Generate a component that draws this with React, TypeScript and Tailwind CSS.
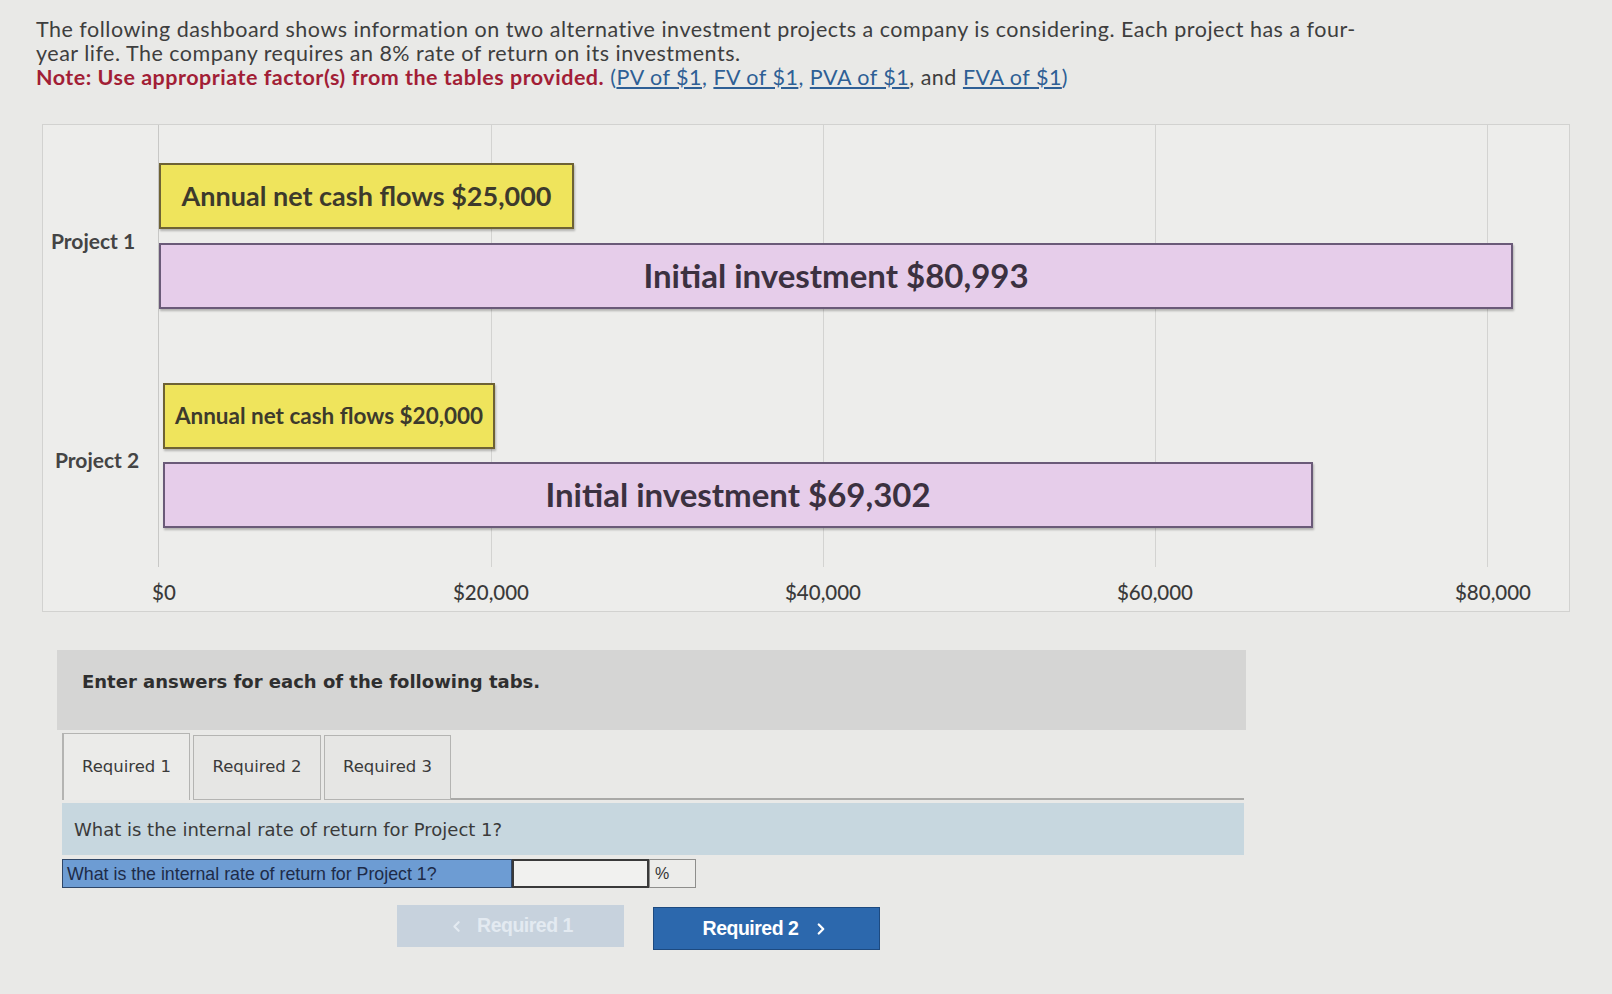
import React from "react";
import { ChevronLeft, ChevronRight } from "lucide-react";

const PX_PER_DOLLAR = 332 / 20000;

function CashBar({ value, small }: { value: number; small?: boolean }) {
  return (
    <div
      className="h-[66px] bg-[#efe45c] border-2 border-[#6e6234] shadow-[1px_2px_2px_rgba(0,0,0,0.25)] flex items-center justify-center"
      style={{ width: Math.round(value * PX_PER_DOLLAR) }}
    >
      <span
        className={
          "font-bold text-[#3d3a2c] whitespace-nowrap " +
          (small ? "text-[22.5px]" : "text-[27px]")
        }
      >
        Annual net cash flows ${value.toLocaleString("en-US")}
      </span>
    </div>
  );
}

function InvestBar({ value, width }: { value: number; width: number }) {
  return (
    <div
      className="h-[66px] bg-[#e6cdea] border-2 border-[#6a5a78] shadow-[1px_2px_2px_rgba(0,0,0,0.25)] flex items-center justify-center"
      style={{ width }}
    >
      <span className="font-bold text-[33px] text-[#3b3140] whitespace-nowrap">
        Initial investment ${value.toLocaleString("en-US")}
      </span>
    </div>
  );
}

export default function App() {
  const ticks = ["$0", "$20,000", "$40,000", "$60,000", "$80,000"];
  return (
    <div className="w-[1612px] h-[994px] overflow-hidden bg-[#e9e9e7] font-['Lato',sans-serif]">
      {/* intro text */}
      <div className="pl-[36px] pt-[17px] text-[21.5px] leading-[24px] tracking-[0.5px] text-[#3e3e3e]">
        The following dashboard shows information on two alternative investment projects a company is considering. Each project has a four-
        <br />
        year life. The company requires an 8% rate of return on its investments.
        <br />
        <span className="font-bold text-[#a21e36]">Note: Use appropriate factor(s) from the tables provided.</span>{" "}
        <span className="text-[#2e5f95]">
          (<span className="underline">PV of $1</span>, <span className="underline">FV of $1</span>,{" "}
          <span className="underline">PVA of $1</span>
        </span>
        <span>, and </span>
        <span className="text-[#2e5f95]">
          <span className="underline">FVA of $1</span>)
        </span>
      </div>

      {/* chart */}
      <div className="ml-[42px] mt-[35px] w-[1528px] h-[488px] border border-[#d2d2d0] bg-[#ededeb] flex flex-col font-['Lato',sans-serif]">
        <div className="flex h-[442px]">
          <div className="w-[115px] flex flex-col">
            <div className="h-[221px] flex items-center pl-[8px] pt-[10px]">
              <span className="font-bold text-[21px] text-[#444]">Project 1</span>
            </div>
            <div className="h-[221px] flex items-center pl-[12px] pt-[6px]">
              <span className="font-bold text-[21px] text-[#444]">Project 2</span>
            </div>
          </div>
          <div className="relative flex-1 border-l border-[#c8c8c6]">
            {[332, 664, 996, 1328].map((x) => (
              <div
                key={x}
                className="absolute top-0 bottom-0 w-px bg-[#d3d3d1]"
                style={{ left: x }}
              />
            ))}
            <div className="relative h-[221px] pt-[38px] flex flex-col gap-[14px]">
              <CashBar value={25000} />
              <InvestBar value={80993} width={Math.round(80993 * PX_PER_DOLLAR) + 10} />
            </div>
            <div className="relative h-[221px] pt-[37px] flex flex-col gap-[13px] pl-[4px]">
              <CashBar value={20000} small />
              <InvestBar value={69302} width={Math.round(69302 * PX_PER_DOLLAR)} />
            </div>
          </div>
        </div>
        <div className="relative h-[46px]">
          {ticks.map((t, i) => (
            <span
              key={t}
              className="absolute top-[13px] -translate-x-1/2 text-[20.5px] leading-[24px] text-[#3a3a3a] font-medium"
              style={{ left: 116 + i * 332 + (i === 0 ? 5 : 0) + (i === 4 ? 6 : 0) }}
            >
              {t}
            </span>
          ))}
        </div>
      </div>

      {/* answer section */}
      <div className="ml-[57px] mt-[38px] w-[1189px] h-[80px] bg-[#d5d5d4] pl-[25px] pt-[18px]">
        <span className="font-['DejaVu_Sans',sans-serif] font-bold text-[18px] text-[#2f2f2f]">
          Enter answers for each of the following tabs.
        </span>
      </div>

      <div className="ml-[62px] mt-[3px] w-[1182px] flex items-end">
        <div className="w-[128px] h-[67px] border border-b-0 border-[#b4b4b2] border-l-2 bg-[#ebebe9] flex items-center justify-center font-['DejaVu_Sans',sans-serif] text-[16.5px] text-[#3a3a3a]">
          Required 1
        </div>
        <div className="ml-[3px] w-[128px] h-[65px] border border-[#b4b4b2] bg-[#e6e6e4] flex items-center justify-center font-['DejaVu_Sans',sans-serif] text-[16.5px] text-[#3a3a3a]">
          Required 2
        </div>
        <div className="ml-[3px] w-[127px] h-[65px] border border-[#b4b4b2] bg-[#e6e6e4] flex items-center justify-center font-['DejaVu_Sans',sans-serif] text-[16.5px] text-[#3a3a3a]">
          Required 3
        </div>
        <div className="flex-1 border-b-2 border-[#a9a9a7]" />
      </div>

      <div className="ml-[62px] mt-[3px] w-[1182px] h-[52px] bg-[#c7d7df] flex items-center pl-[12px]">
        <span className="font-['DejaVu_Sans',sans-serif] text-[18px] text-[#3a3a3a]">
          What is the internal rate of return for Project 1?
        </span>
      </div>

      <div className="ml-[62px] mt-[4px] flex h-[29px]">
        <div className="w-[450px] bg-[#6d9cd3] border border-[#2e4668] flex items-center pl-[4px]">
          <span className="font-['Liberation_Sans',sans-serif] text-[17.8px] leading-[20px] text-[#1d2b48]">
            What is the internal rate of return for Project 1?
          </span>
        </div>
        <div className="w-[137px] bg-[#f1f1ef] border-2 border-[#3a3a3a]" />
        <div className="w-[47px] bg-[#ececea] border border-[#8e8e8c] flex items-center pl-[5px]">
          <span className="font-['Liberation_Sans',sans-serif] text-[16px] text-[#333]">%</span>
        </div>
      </div>

      <div className="ml-[397px] mt-[17px] flex items-start gap-[29px]">
        <div className="w-[227px] h-[42px] bg-[#c7d2dd] flex items-center justify-center gap-[12px] font-['Liberation_Sans',sans-serif] font-bold text-[19.5px] text-[#e3eaf1] tracking-[-0.5px]">
          <ChevronLeft size={17} strokeWidth={3} />
          <span>Required 1</span>
        </div>
        <div className="mt-[2px] w-[227px] h-[43px] bg-[#2c68ad] border border-[#1d4a80] flex items-center justify-center gap-[14px] font-['Liberation_Sans',sans-serif] font-bold text-[19.5px] text-white tracking-[-0.5px]">
          <span>Required 2</span>
          <ChevronRight size={18} strokeWidth={3} />
        </div>
      </div>
    </div>
  );
}
